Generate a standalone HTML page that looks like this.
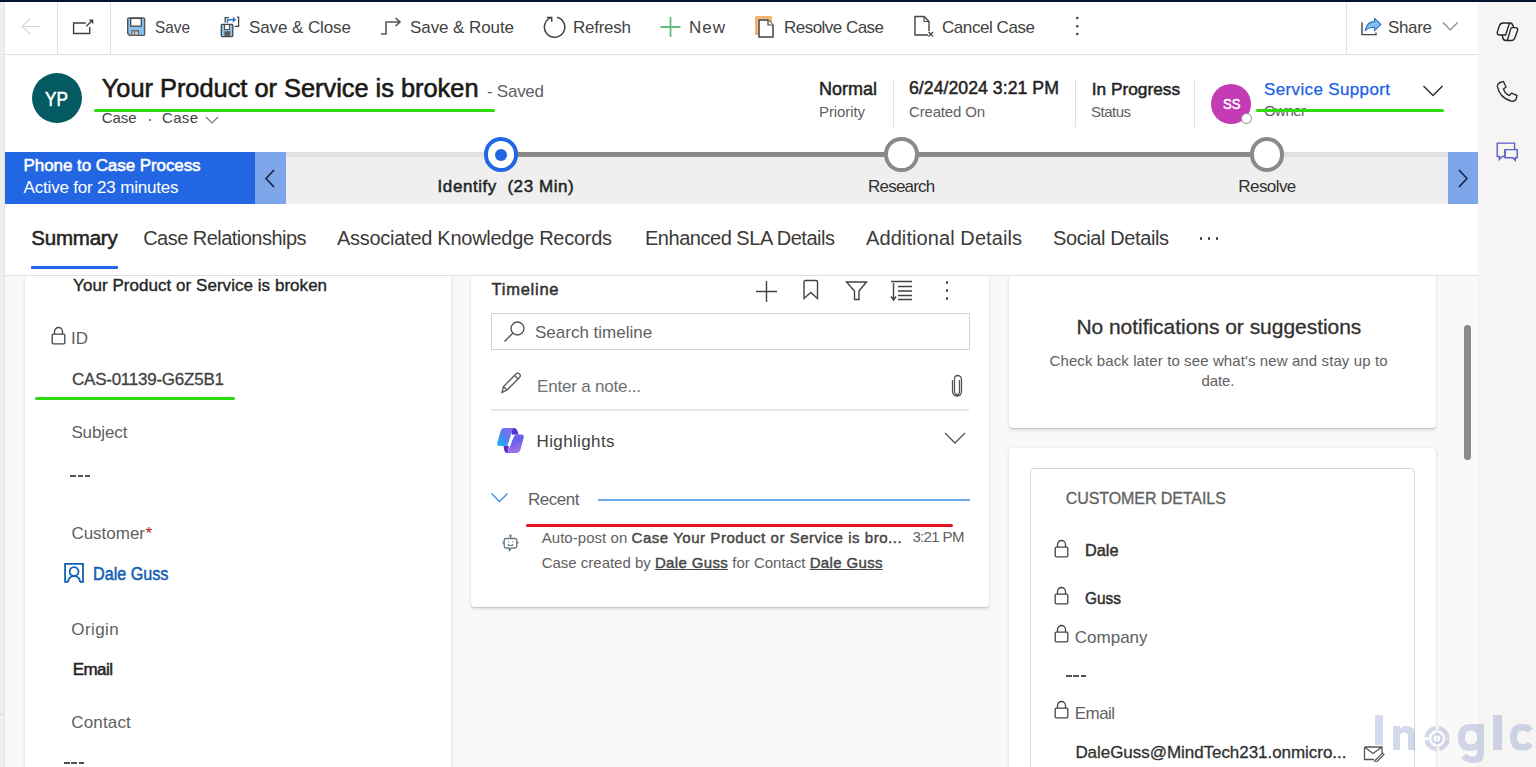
<!DOCTYPE html>
<html><head><meta charset="utf-8"><style>
html,body{margin:0;padding:0;}
body{width:1536px;height:767px;overflow:hidden;position:relative;background:#fff;font-family:"Liberation Sans",sans-serif;}
body>div,body>svg{position:absolute;}
.t{white-space:nowrap;}
</style></head><body>
<div style="left:0px;top:0px;width:1536px;height:767px;background:#fff"></div>
<div style="left:5px;top:276px;width:1473px;height:491px;background:#faf9f8"></div>
<div style="left:1478px;top:2px;width:58px;height:765px;background:#f6f5f4"></div>
<div style="left:0px;top:0px;width:1536px;height:2px;background:#021431"></div>
<div style="left:0px;top:2px;width:5px;height:765px;background:#efefef"></div>
<div style="left:4px;top:2px;width:1px;height:765px;background:#e3e3e3"></div>
<div style="left:0px;top:714px;width:4px;height:1px;background:#dadada"></div>
<div style="left:5px;top:54px;width:1473px;height:1px;background:#e1dfdd"></div>
<div style="left:57px;top:2px;width:1px;height:52px;background:#e1dfdd"></div>
<div style="left:110px;top:2px;width:1px;height:52px;background:#e1dfdd"></div>
<div style="left:1346px;top:2px;width:1px;height:52px;background:#e1dfdd"></div>
<div style="left:5px;top:275px;width:1473px;height:1px;background:#e1dfdd"></div>
<div class="t" style="left:155.00px;top:17.61px;font-size:17px;line-height:18.99px;color:#424242;transform:scaleX(0.9030);transform-origin:0.00px 0;">Save</div>
<div class="t" style="left:249.00px;top:17.61px;font-size:17px;line-height:18.99px;color:#424242;letter-spacing:-0.093px;">Save &amp; Close</div>
<div class="t" style="left:410.00px;top:17.61px;font-size:17px;line-height:18.99px;color:#424242;letter-spacing:-0.081px;">Save &amp; Route</div>
<div class="t" style="left:573.00px;top:17.61px;font-size:17px;line-height:18.99px;color:#424242;letter-spacing:-0.250px;">Refresh</div>
<div class="t" style="left:689.00px;top:17.61px;font-size:17px;line-height:18.99px;color:#424242;letter-spacing:0.957px;">New</div>
<div class="t" style="left:784.00px;top:17.61px;font-size:17px;line-height:18.99px;color:#424242;letter-spacing:-0.530px;">Resolve Case</div>
<div class="t" style="left:942.00px;top:17.61px;font-size:17px;line-height:18.99px;color:#424242;letter-spacing:-0.433px;">Cancel Case</div>
<div class="t" style="left:1388.00px;top:17.61px;font-size:17px;line-height:18.99px;color:#424242;letter-spacing:-0.348px;">Share</div>
<svg style="left:20px;top:16px" width="22" height="20" viewBox="0 0 22 20"><path d="M10.4 2.4 L2.2 10.5 L10.4 18 M2.2 10.5 H19.6" fill="none" stroke="#d6d6d6" stroke-width="1.1"/></svg>
<svg style="left:66px;top:12px" width="30" height="30" viewBox="0 0 30 30"><path d="M19.8 11 H7.6 V21.5 H23.7 V15" fill="none" stroke="#404040" stroke-width="1.4"/><path d="M20.3 14.3 L26.4 8.4 M23.4 8.2 H26.6 V11.4" fill="none" stroke="#404040" stroke-width="1.4"/></svg>
<svg style="left:120px;top:10px" width="30" height="30" viewBox="0 0 30 30"><path d="M8.9 7.9 H23.4 Q24.6 7.9 24.6 9.1 V24.2 Q24.6 25.4 23.4 25.4 H9.6 L7.7 23.5 V9.1 Q7.7 7.9 8.9 7.9 Z" fill="#88c2f0" stroke="#555" stroke-width="1.4"/><rect x="10.7" y="8.4" width="10.6" height="7.8" fill="#fff" stroke="#474747" stroke-width="1.3"/><rect x="11.3" y="20.1" width="7.9" height="5.3" fill="#6a6a6a"/><rect x="12.5" y="21.5" width="5.5" height="3.2" fill="#c8c8c8"/><path d="M14.6 21.5 V24.7" stroke="#6a6a6a" stroke-width="0.9"/></svg>
<svg style="left:215px;top:10px" width="30" height="30" viewBox="0 0 30 30"><rect x="6.3" y="14.3" width="11.5" height="12.3" rx="1" fill="#92c4ea" stroke="#454545" stroke-width="1.3"/><rect x="9.6" y="14.6" width="4.8" height="5" fill="#fff" stroke="#454545" stroke-width="1"/><rect x="9.4" y="21.3" width="5.8" height="4.6" fill="#5a5a5a"/><path d="M13.8 7.6 H10.2 V12.6 M22 7.2 H23.6 V16.3 H19.8" fill="none" stroke="#444" stroke-width="1.3"/><path d="M12.5 13 V9.7 H18.5" fill="none" stroke="#2b79c9" stroke-width="1.5"/><path d="M17.8 6.6 L21.2 9.7 L17.8 12.8 Z" fill="#2b79c9"/></svg>
<svg style="left:379px;top:17px" width="24" height="20" viewBox="0 0 24 20"><path d="M2 17 H7 V5 H21 M16.5 1 L21 5 L16.5 9" fill="none" stroke="#555" stroke-width="1.6"/></svg>
<svg style="left:542px;top:15px" width="24" height="24" viewBox="0 0 24 24"><path d="M15 2.2 A10.2 10.2 0 1 1 9.5 2.4" fill="none" stroke="#424242" stroke-width="1.5"/><path d="M4.8 2.4 H9.7 V6.8" fill="none" stroke="#424242" stroke-width="1.5"/></svg>
<svg style="left:660px;top:16px" width="22" height="22" viewBox="0 0 22 22"><path d="M10.5 1 V21 M0.5 11 H20.5" fill="none" stroke="#5fbe7d" stroke-width="1.8"/></svg>
<svg style="left:754px;top:15px" width="22" height="24" viewBox="0 0 22 24"><rect x="2" y="2" width="15" height="17" fill="#f7c38a" stroke="#f0a04b" stroke-width="1.5"/><path d="M5 5 H14 L19 10 V22 H5 Z" fill="#fff" stroke="#444" stroke-width="1.5"/><path d="M14 5 V10 H19" fill="#fff" stroke="#444" stroke-width="1.2"/></svg>
<svg style="left:913px;top:15px" width="24" height="23" viewBox="0 0 24 23"><path d="M15 20 H2 V1.5 H11 L16 6.5 V16" fill="none" stroke="#444" stroke-width="1.4"/><path d="M11 1.5 V6.5 H16" fill="none" stroke="#444" stroke-width="1.1"/><path d="M15.5 17 L20 21.5 M20 17 L15.5 21.5" stroke="#444" stroke-width="1.3"/></svg>
<svg style="left:1074px;top:15px" width="7" height="23" viewBox="0 0 7 23"><circle cx="3.3" cy="3" r="1.3" fill="#444"/><circle cx="3.3" cy="11.3" r="1.3" fill="#444"/><circle cx="3.3" cy="19" r="1.3" fill="#444"/></svg>
<svg style="left:1360px;top:16px" width="24" height="22" viewBox="0 0 24 22"><path d="M2 6.5 V18.6 H16 V16.5" fill="none" stroke="#424242" stroke-width="1.4"/><path d="M21 8.4 L14.6 2.3 V5.6 C9.5 5.6 6.2 9 5.2 14.6 C7.5 12.2 10.5 11.2 14.6 11.2 V14.6 Z" fill="#86bdee" stroke="#2a72c6" stroke-width="1.1" stroke-linejoin="round"/></svg>
<svg style="left:1441px;top:20px" width="18" height="13" viewBox="0 0 18 13"><path d="M2 2.5 L9.3 10 L16.6 2.5" fill="none" stroke="#8a8886" stroke-width="1.2"/></svg>
<svg style="left:1490px;top:14px" width="36" height="36" viewBox="0 0 36 36"><path d="M13 9 H20 Q22.2 9 23.2 12 L23.8 13.8 M13 9 Q10.2 9 9.3 12 L7.3 18 Q6.6 21 9.6 21 H12.2 L12.7 23.5 Q13.3 26.5 16 26.5 H21.5 Q24 26.5 25 23.5 L27.5 16.5 Q28.2 13.6 25.5 13.6 H21.2 M19.6 9 L15.6 21 H12 M21.2 13.6 L17.2 26.5" fill="none" stroke="#242424" stroke-width="1.35" stroke-linejoin="round"/></svg>
<svg style="left:1496px;top:79.5px" width="22" height="23" viewBox="0 0 22 23"><path d="M4 2.5 L7.5 1.5 L10 7 L7.5 9 C8.5 12 10.5 14.5 13.5 15.5 L15.5 13 L21 15.5 L20 19.5 C19 21 17 21.5 15 21 C8 19 3 13.5 1.5 7 C1 5 2 3.5 4 2.5 Z" fill="none" stroke="#333" stroke-width="1.4"/></svg>
<svg style="left:1496px;top:142px" width="24" height="22" viewBox="0 0 24 22"><path d="M9 7.6 V14.5 H6.2 L3.3 17.6 V14.5 H1.2 V1.1 H18.6 V7.6" fill="none" stroke="#5b5fc7" stroke-width="1.4"/><path d="M9 7.6 H21.2 V15.7 H19.3 V18.3 L16.6 15.7 H9 Z" fill="none" stroke="#5b5fc7" stroke-width="1.4"/></svg>
<div style="left:32px;top:73px;width:50px;height:50px;border-radius:50%;background:#035a62"></div>
<div class="t" style="left:45.20px;top:87.29px;font-size:21px;line-height:23.46px;color:#fff;transform:scaleX(0.8133);transform-origin:0.00px 0;-webkit-text-stroke:0.6px #fff;">YP</div>
<div class="t" style="left:101.70px;top:74.01px;font-size:25.4px;line-height:28.38px;color:#1b1a19;letter-spacing:-0.014px;-webkit-text-stroke:0.6px #1b1a19;">Your Product or Service is broken</div>
<div class="t" style="left:487.00px;top:81.61px;font-size:17px;line-height:18.99px;color:#616161;letter-spacing:-0.261px;">- Saved</div>
<div class="t" style="left:101.70px;top:110.42px;font-size:15px;line-height:16.76px;color:#424242;">Case</div>
<div style="left:149px;top:119px;width:2px;height:2px;background:#555;border-radius:1px"></div>
<div class="t" style="left:162.00px;top:110.42px;font-size:15px;line-height:16.76px;color:#424242;letter-spacing:0.325px;">Case</div>
<svg style="left:205px;top:116px" width="15" height="9" viewBox="0 0 15 9"><path d="M1 1 L7 7 L13 1" fill="none" stroke="#777" stroke-width="1.2"/></svg>
<div style="left:94px;top:109px;width:401px;height:3px;background:#2ddc0f;border-radius:1.5px"></div>
<div class="t" style="left:819.00px;top:79.20px;font-size:18px;line-height:20.11px;color:#242424;-webkit-text-stroke:0.5px #242424;">Normal</div>
<div class="t" style="left:819.00px;top:104.42px;font-size:15px;line-height:16.76px;color:#616161;letter-spacing:-0.093px;">Priority</div>
<div style="left:893px;top:79px;width:1px;height:48px;background:#e0e0e0"></div>
<div class="t" style="left:909.00px;top:79.48px;font-size:17.7px;line-height:19.77px;color:#242424;letter-spacing:0.027px;-webkit-text-stroke:0.5px #242424;">6/24/2024 3:21 PM</div>
<div class="t" style="left:909.00px;top:104.42px;font-size:15px;line-height:16.76px;color:#616161;letter-spacing:-0.172px;">Created On</div>
<div style="left:1075px;top:79px;width:1px;height:48px;background:#e0e0e0"></div>
<div class="t" style="left:1091.70px;top:79.84px;font-size:17.3px;line-height:19.33px;color:#242424;-webkit-text-stroke:0.5px #242424;">In Progress</div>
<div class="t" style="left:1091.00px;top:104.42px;font-size:15px;line-height:16.76px;color:#616161;letter-spacing:-0.505px;">Status</div>
<div style="left:1194px;top:79px;width:1px;height:48px;background:#e0e0e0"></div>
<div style="left:1211px;top:83.5px;width:40px;height:40px;border-radius:50%;background:#c43bb4"></div>
<div class="t" style="left:1222.50px;top:96.32px;font-size:15px;line-height:16.76px;color:#fff;transform:scaleX(0.8739);transform-origin:0.00px 0;-webkit-text-stroke:0.5px #fff;">SS</div>
<div style="left:1240.5px;top:112.5px;width:9px;height:9px;border-radius:50%;background:#fff;border:1.6px solid #8a8886"></div>
<div class="t" style="left:1264.00px;top:80.01px;font-size:17px;line-height:18.99px;color:#1b5fe6;letter-spacing:0.360px;-webkit-text-stroke:0.25px #1b5fe6;">Service Support</div>
<div class="t" style="left:1264.00px;top:103.42px;font-size:15px;line-height:16.76px;color:#616161;letter-spacing:-0.544px;">Owner</div>
<div style="left:1256px;top:109px;width:188px;height:3px;background:#2ddc0f;border-radius:1.5px"></div>
<svg style="left:1422px;top:84px" width="22" height="14" viewBox="0 0 22 14"><path d="M1.5 2 L11 11.5 L20.5 2" fill="none" stroke="#323130" stroke-width="1.5"/></svg>
<div style="left:5px;top:152px;width:250px;height:52px;background:#2266e3"></div>
<div style="left:255px;top:152px;width:31px;height:52px;background:#7ca5ea"></div>
<svg style="left:262px;top:168px" width="16" height="22" viewBox="0 0 16 22"><path d="M12 2 L4 10.5 L12 19" fill="none" stroke="#1b1f3b" stroke-width="1.6"/></svg>
<div style="left:286px;top:152px;width:1162px;height:52px;background:#efefef"></div>
<div style="left:1448px;top:152px;width:30px;height:52px;background:#7ca5ea"></div>
<svg style="left:1455px;top:168px" width="16" height="22" viewBox="0 0 16 22"><path d="M4 2 L12 10.5 L4 19" fill="none" stroke="#1b1f3b" stroke-width="1.6"/></svg>
<div style="left:286px;top:152px;width:1162px;height:5px;background:#e0e0e0"></div>
<div style="left:501px;top:152px;width:766px;height:5px;background:#8a8a8a"></div>
<div style="left:483.6px;top:137.2px;width:26.6px;height:26.6px;border-radius:50%;background:#fff;border:4.5px solid #2266e3"></div>
<div style="left:495.4px;top:149px;width:12px;height:12px;border-radius:50%;background:#2266e3"></div>
<div style="left:884.2px;top:137.3px;width:26.4px;height:26.4px;border-radius:50%;background:#fff;border:4.4px solid #8a8a8a"></div>
<div style="left:1249.8px;top:137.3px;width:26.4px;height:26.4px;border-radius:50%;background:#fff;border:4.4px solid #8a8a8a"></div>
<div class="t" style="left:23.60px;top:156.21px;font-size:17px;line-height:18.99px;color:#fff;letter-spacing:-0.079px;-webkit-text-stroke:0.55px #fff;">Phone to Case Process</div>
<div class="t" style="left:23.60px;top:178.31px;font-size:17px;line-height:18.99px;color:#fff;letter-spacing:-0.189px;">Active for 23 minutes</div>
<div class="t" style="left:437.60px;top:176.81px;font-size:17px;line-height:18.99px;color:#242424;letter-spacing:0.555px;-webkit-text-stroke:0.5px #242424;">Identify&nbsp; (23 Min)</div>
<div class="t" style="left:868.00px;top:176.61px;font-size:17px;line-height:18.99px;color:#323130;letter-spacing:-0.780px;">Research</div>
<div class="t" style="left:1238.30px;top:176.61px;font-size:17px;line-height:18.99px;color:#323130;letter-spacing:-0.576px;">Resolve</div>
<div class="t" style="left:31.25px;top:226.84px;font-size:20.5px;line-height:22.90px;color:#242424;letter-spacing:-0.207px;-webkit-text-stroke:0.55px #242424;">Summary</div>
<div style="left:31px;top:266px;width:87px;height:2.5px;background:#2266e3;border-radius:1px"></div>
<div class="t" style="left:143.20px;top:227.29px;font-size:20px;line-height:22.34px;color:#3b3a39;letter-spacing:-0.529px;">Case Relationships</div>
<div class="t" style="left:337.00px;top:227.29px;font-size:20px;line-height:22.34px;color:#3b3a39;letter-spacing:-0.274px;">Associated Knowledge Records</div>
<div class="t" style="left:645.00px;top:227.29px;font-size:20px;line-height:22.34px;color:#3b3a39;letter-spacing:-0.474px;">Enhanced SLA Details</div>
<div class="t" style="left:866.00px;top:227.29px;font-size:20px;line-height:22.34px;color:#3b3a39;letter-spacing:0.088px;">Additional Details</div>
<div class="t" style="left:1053.00px;top:227.29px;font-size:20px;line-height:22.34px;color:#3b3a39;letter-spacing:-0.400px;">Social Details</div>
<div style="left:1199.5px;top:237.3px;width:2.6px;height:2.6px;background:#323130;border-radius:50%"></div>
<div style="left:1207.5px;top:237.3px;width:2.6px;height:2.6px;background:#323130;border-radius:50%"></div>
<div style="left:1215.5px;top:237.3px;width:2.6px;height:2.6px;background:#323130;border-radius:50%"></div>
<div style="left:25px;top:276px;width:426px;height:491px;background:#fff;box-shadow:0 1.6px 3.6px rgba(0,0,0,0.13),0 0.3px 0.9px rgba(0,0,0,0.11)"></div>
<div style="left:471px;top:276px;width:518px;height:331px;background:#fff;border-radius:0 0 4px 4px;box-shadow:0 1.6px 3.6px rgba(0,0,0,0.13),0 0.3px 0.9px rgba(0,0,0,0.11)"></div>
<div style="left:1009px;top:276px;width:427px;height:152px;background:#fff;border-radius:0 0 4px 4px;box-shadow:0 1.6px 3.6px rgba(0,0,0,0.13),0 0.3px 0.9px rgba(0,0,0,0.11)"></div>
<div style="left:1009px;top:448px;width:427px;height:330px;background:#fff;border-radius:4px;box-shadow:0 1.6px 3.6px rgba(0,0,0,0.13),0 0.3px 0.9px rgba(0,0,0,0.11)"></div>
<div style="left:1030px;top:468px;width:383px;height:320px;background:#fff;border-radius:4px;border:1px solid #d6d6d6"></div>
<div style="left:5px;top:275px;width:1473px;height:1px;background:#e1dfdd"></div>
<div style="left:1463.5px;top:325px;width:7.5px;height:134.5px;background:#8a8a8a;border-radius:4px"></div>
<div class="t" style="left:73.10px;top:276.41px;font-size:17px;line-height:18.99px;color:#242424;letter-spacing:0.043px;-webkit-text-stroke:0.35px #242424;">Your Product or Service is broken</div>
<svg style="left:50.5px;top:326.0px" width="15" height="19" viewBox="0 0 15 19"><path d="M3.5 8 V5.5 A4 4 0 0 1 11.5 5.5 V8" fill="none" stroke="#444" stroke-width="1.3"/><rect x="1.2" y="8.2" width="12.6" height="9.6" rx="1" fill="none" stroke="#444" stroke-width="1.3"/></svg>
<div class="t" style="left:71.00px;top:328.91px;font-size:17px;line-height:18.99px;color:#616161;">ID</div>
<div class="t" style="left:72.00px;top:369.61px;font-size:17px;line-height:18.99px;color:#424242;letter-spacing:-0.242px;-webkit-text-stroke:0.3px #424242;">CAS-01139-G6Z5B1</div>
<div style="left:35px;top:396.5px;width:200px;height:3px;background:#2ddc0f;border-radius:1.5px"></div>
<div class="t" style="left:71.40px;top:423.21px;font-size:17px;line-height:18.99px;color:#616161;letter-spacing:-0.116px;">Subject</div>
<div style="left:70.3px;top:474.8px;width:5.5px;height:2px;background:#505050"></div>
<div style="left:77.6px;top:474.8px;width:5.5px;height:2px;background:#505050"></div>
<div style="left:84.9px;top:474.8px;width:5.5px;height:2px;background:#505050"></div>
<div class="t" style="left:71.40px;top:523.61px;font-size:17px;line-height:18.99px;color:#616161;letter-spacing:-0.014px;">Customer</div>
<div class="t" style="left:145.50px;top:523.61px;font-size:17px;line-height:18.99px;color:#c50f1f;">*</div>
<svg style="left:63.5px;top:563px" width="21" height="20" viewBox="0 0 21 20"><path d="M4.2 18.9 H1.1 V0.9 H19 V18.9 H16" fill="none" stroke="#1160b7" stroke-width="1.8"/><circle cx="10.1" cy="8.5" r="4.4" fill="none" stroke="#1160b7" stroke-width="1.8"/><path d="M4.2 18.9 Q4.6 13.2 10.1 13.2 Q15.6 13.2 16 18.9" fill="none" stroke="#1160b7" stroke-width="1.8"/></svg>
<div class="t" style="left:92.50px;top:564.66px;font-size:17.5px;line-height:19.55px;color:#1160b7;transform:scaleX(0.9226);transform-origin:0.00px 0;-webkit-text-stroke:0.5px #1160b7;">Dale Guss</div>
<div class="t" style="left:71.30px;top:620.31px;font-size:17px;line-height:18.99px;color:#616161;letter-spacing:0.402px;">Origin</div>
<div class="t" style="left:72.70px;top:659.91px;font-size:17px;line-height:18.99px;color:#242424;letter-spacing:-0.550px;-webkit-text-stroke:0.5px #242424;">Email</div>
<div class="t" style="left:71.30px;top:712.91px;font-size:17px;line-height:18.99px;color:#616161;letter-spacing:0.156px;">Contact</div>
<div style="left:64.0px;top:761.8px;width:5.5px;height:2px;background:#505050"></div>
<div style="left:71.3px;top:761.8px;width:5.5px;height:2px;background:#505050"></div>
<div style="left:78.6px;top:761.8px;width:5.5px;height:2px;background:#505050"></div>
<div class="t" style="left:491.50px;top:280.06px;font-size:16.5px;line-height:18.43px;color:#323130;letter-spacing:0.756px;-webkit-text-stroke:0.5px #323130;">Timeline</div>
<svg style="left:755px;top:280px" width="23" height="23" viewBox="0 0 23 23"><path d="M11.5 1 V22 M1 11.5 H22" fill="none" stroke="#424242" stroke-width="1.4"/></svg>
<svg style="left:802px;top:279px" width="18" height="22" viewBox="0 0 18 22"><path d="M2 3 C2 2 2.5 1.5 3.5 1.5 H14 C15 1.5 15.5 2 15.5 3 V19.5 L8.75 13.5 L2 19.5 Z" fill="none" stroke="#424242" stroke-width="1.4"/></svg>
<svg style="left:845px;top:280px" width="24" height="22" viewBox="0 0 24 22"><path d="M1.5 2 H21.5 L14 11 V19.5 H9.5 V11 Z" fill="none" stroke="#424242" stroke-width="1.4"/></svg>
<svg style="left:890px;top:279px" width="24" height="23" viewBox="0 0 24 23"><path d="M1 2.5 H22 M8 7.5 H22 M8 12 H22 M8 16.5 H22 M8 20.5 H22 M3.5 4 V20 M1 17.5 L3.5 21 L6 17.5" fill="none" stroke="#424242" stroke-width="1.4"/></svg>
<div style="left:945.5px;top:281.3px;width:2.8px;height:2.8px;border-radius:50%;background:#424242"></div>
<div style="left:945.5px;top:289.2px;width:2.8px;height:2.8px;border-radius:50%;background:#424242"></div>
<div style="left:945.5px;top:296.9px;width:2.8px;height:2.8px;border-radius:50%;background:#424242"></div>
<div style="left:491px;top:313px;width:477px;height:35px;border:1px solid #d1d1d1;background:#fff"></div>
<svg style="left:503px;top:320px" width="24" height="23" viewBox="0 0 24 23"><circle cx="14.5" cy="8.5" r="6.5" fill="none" stroke="#555" stroke-width="1.4"/><path d="M10 13 L1.5 21.5" fill="none" stroke="#555" stroke-width="1.4"/></svg>
<div class="t" style="left:535.00px;top:323.41px;font-size:17px;line-height:18.99px;color:#616161;">Search timeline</div>
<svg style="left:500px;top:371px" width="23" height="23" viewBox="0 0 23 23"><path d="M2 21.5 L3.5 15.5 L16 3 C17 2 18.5 2 19.5 3 C20.5 4 20.5 5.5 19.5 6.5 L7 19 Z M14.5 4.5 L18 8 M3.5 15.5 L7 19" fill="none" stroke="#555" stroke-width="1.3"/></svg>
<div class="t" style="left:537.00px;top:377.41px;font-size:17px;line-height:18.99px;color:#707070;letter-spacing:-0.197px;">Enter a note...</div>
<svg style="left:950px;top:374px" width="14" height="23" viewBox="0 0 14 23"><path d="M9.5 6 V17 C9.5 19 8.5 20.5 7 20.5 C5.5 20.5 4.5 19 4.5 17 V5 C4.5 3 5.5 1.5 7.5 1.5 C9.5 1.5 11.5 3 11.5 5.5 V17 C11.5 20 10 22 7 22 C4 22 2.5 20 2.5 17 V6" fill="none" stroke="#555" stroke-width="1.3"/></svg>
<div style="left:491px;top:409px;width:478px;height:2px;background:#e6e6e6"></div>
<svg style="left:490px;top:420px" width="40" height="40" viewBox="0 0 40 40"><defs><linearGradient id="cg1" x1="0" y1="1" x2="0.8" y2="0"><stop offset="0" stop-color="#16b8f4"/><stop offset="0.6" stop-color="#5a7cf0"/><stop offset="1" stop-color="#8a6ae8"/></linearGradient><linearGradient id="cg2" x1="0" y1="0" x2="0.3" y2="1"><stop offset="0" stop-color="#8b6cf0"/><stop offset="0.4" stop-color="#6360e6"/><stop offset="1" stop-color="#a070ec"/></linearGradient></defs>
<path d="M20 8 H23.5 Q26.5 8 27.5 11 L28.7 14.8 H22 Z" fill="#4a3ad0"/>
<path d="M14 8 H23 L17.5 26 H10 Q6.5 26 7.3 22.5 L10.5 11.5 Q11.5 8 14 8 Z" fill="url(#cg1)"/>
<path d="M13.5 26 H19 L17.8 33 H17 Q14.8 33 14.2 30 Z" fill="#6a28c8"/>
<path d="M24.5 14.5 H31 Q34.5 14.5 33.6 18 L30.5 29.5 Q29.5 33 26 33 H17.5 Z" fill="url(#cg2)"/>
<path d="M24.3 14.5 L18 26" stroke="#fff" stroke-width="1.2"/></svg>
<div class="t" style="left:536.50px;top:431.61px;font-size:17px;line-height:18.99px;color:#424242;letter-spacing:0.374px;">Highlights</div>
<svg style="left:943px;top:431px" width="24" height="15" viewBox="0 0 24 15"><path d="M2 2 L12 12 L22 2" fill="none" stroke="#555" stroke-width="1.4"/></svg>
<svg style="left:490px;top:491px" width="20" height="14" viewBox="0 0 20 14"><path d="M1.5 2.5 L9.5 10.5 L17.5 2.5" fill="none" stroke="#4a90e2" stroke-width="1.5"/></svg>
<div class="t" style="left:528.00px;top:489.61px;font-size:17px;line-height:18.99px;color:#616161;letter-spacing:-0.478px;">Recent</div>
<div style="left:598px;top:499px;width:371.6px;height:1.6px;background:#6aaae8"></div>
<div style="left:526px;top:524px;width:426.6px;height:3px;background:#e81123;border-radius:1.5px"></div>
<svg style="left:495px;top:525px" width="30" height="35" viewBox="0 0 30 35"><circle cx="15.5" cy="10.7" r="1.3" fill="#6b7a84"/><path d="M15.5 11 V13" stroke="#6b7a84" stroke-width="1.2"/><path d="M11 13.5 H20 Q21.8 13.5 21.8 15.3 V21.2 Q21.8 23 20 23 H16.3 L14.3 25.8 V23 H11 Q9.2 23 9.2 21.2 V15.3 Q9.2 13.5 11 13.5 Z" fill="none" stroke="#6b7a84" stroke-width="1.3" stroke-linejoin="round"/><path d="M8.3 16.5 V18.8 M22.7 16.5 V18.8" stroke="#6b7a84" stroke-width="1.3"/><path d="M13.3 16.3 V17.6 M17.7 16.3 V17.6" stroke="#8a979e" stroke-width="1.1"/><path d="M12.6 19.4 Q15.5 21.6 18.4 19.4" fill="none" stroke="#6b7a84" stroke-width="1.2"/></svg>
<div class="t" style="left:541.7px;top:529.72px;font-size:15px;line-height:16.76px;color:#616161;letter-spacing:0.05px">Auto-post on <span style="color:#474747;-webkit-text-stroke:0.45px #474747;letter-spacing:0.54px">Case Your Product or Service is bro...</span></div>
<div class="t" style="left:912.40px;top:528.92px;font-size:15px;line-height:16.76px;color:#616161;letter-spacing:-0.646px;">3:21 PM</div>
<div class="t" style="left:541.7px;top:554.62px;font-size:15px;line-height:16.76px;color:#616161;letter-spacing:-0.01px">Case created by <span style="color:#474747;-webkit-text-stroke:0.45px #474747;text-decoration:underline;letter-spacing:0.35px">Dale Guss</span> for Contact <span style="color:#474747;-webkit-text-stroke:0.45px #474747;text-decoration:underline;letter-spacing:0.35px">Dale Guss</span></div>
<div class="t" style="left:1076.40px;top:314.89px;font-size:21px;line-height:23.46px;color:#323130;letter-spacing:-0.034px;-webkit-text-stroke:0.3px #323130;">No notifications or suggestions</div>
<div class="t" style="left:1049.50px;top:353.42px;font-size:15px;line-height:16.76px;color:#616161;letter-spacing:0.103px;">Check back later to see what's new and stay up to</div>
<div class="t" style="left:1201.50px;top:372.92px;font-size:15px;line-height:16.76px;color:#616161;letter-spacing:-0.094px;">date.</div>
<div class="t" style="left:1065.80px;top:489.62px;font-size:16px;line-height:17.88px;color:#616161;letter-spacing:-0.080px;-webkit-text-stroke:0.3px #616161;">CUSTOMER DETAILS</div>
<svg style="left:1054px;top:538.5px" width="15" height="19" viewBox="0 0 15 19"><path d="M3.5 8 V5.5 A4 4 0 0 1 11.5 5.5 V8" fill="none" stroke="#444" stroke-width="1.3"/><rect x="1.2" y="8.2" width="12.6" height="9.6" rx="1" fill="none" stroke="#444" stroke-width="1.3"/></svg>
<div class="t" style="left:1084.60px;top:541.31px;font-size:17px;line-height:18.99px;color:#323130;transform:scaleX(0.9561);transform-origin:0.00px 0;-webkit-text-stroke:0.5px #323130;">Dale</div>
<svg style="left:1054px;top:586.0px" width="15" height="19" viewBox="0 0 15 19"><path d="M3.5 8 V5.5 A4 4 0 0 1 11.5 5.5 V8" fill="none" stroke="#444" stroke-width="1.3"/><rect x="1.2" y="8.2" width="12.6" height="9.6" rx="1" fill="none" stroke="#444" stroke-width="1.3"/></svg>
<div class="t" style="left:1084.60px;top:588.61px;font-size:17px;line-height:18.99px;color:#323130;transform:scaleX(0.9069);transform-origin:0.00px 0;-webkit-text-stroke:0.5px #323130;">Guss</div>
<svg style="left:1054px;top:624.0px" width="15" height="19" viewBox="0 0 15 19"><path d="M3.5 8 V5.5 A4 4 0 0 1 11.5 5.5 V8" fill="none" stroke="#444" stroke-width="1.3"/><rect x="1.2" y="8.2" width="12.6" height="9.6" rx="1" fill="none" stroke="#444" stroke-width="1.3"/></svg>
<div class="t" style="left:1074.80px;top:628.21px;font-size:17px;line-height:18.99px;color:#616161;">Company</div>
<div style="left:1066.0px;top:675.2px;width:5.5px;height:2px;background:#505050"></div>
<div style="left:1073.3px;top:675.2px;width:5.5px;height:2px;background:#505050"></div>
<div style="left:1080.6px;top:675.2px;width:5.5px;height:2px;background:#505050"></div>
<svg style="left:1054px;top:700.0px" width="15" height="19" viewBox="0 0 15 19"><path d="M3.5 8 V5.5 A4 4 0 0 1 11.5 5.5 V8" fill="none" stroke="#444" stroke-width="1.3"/><rect x="1.2" y="8.2" width="12.6" height="9.6" rx="1" fill="none" stroke="#444" stroke-width="1.3"/></svg>
<div class="t" style="left:1074.80px;top:703.81px;font-size:17px;line-height:18.99px;color:#616161;letter-spacing:-0.575px;">Email</div>
<div class="t" style="left:1075.40px;top:743.41px;font-size:17px;line-height:18.99px;color:#323130;letter-spacing:-0.045px;-webkit-text-stroke:0.3px #323130;">DaleGuss@MindTech231.onmicro...</div>
<svg style="left:1363px;top:745px" width="22" height="17" viewBox="0 0 22 17"><path d="M1.5 2 H19 V8 M1.5 2 V14.5 H11 M1.5 2 L10 8.5 L19 2" fill="none" stroke="#555" stroke-width="1.3"/><path d="M12 15.5 L19.5 8 L21 9.5 L13.5 17 L11.5 17.5 Z" fill="none" stroke="#555" stroke-width="1.2"/></svg>
<svg style="left:1370px;top:710px" width="166" height="57" viewBox="0 0 166 57"><g fill="rgba(140,152,200,0.38)"><path d="M5 5 H13 V35 H5 Z"/><path d="M23 16 H30 V19 Q33 15.5 38 16 Q45 17 45 25 V40 H38 V26 Q38 22.5 34 22.5 Q30 22.5 30 26 V40 H23 Z"/><path fill-rule="evenodd" d="M101 14 H114 V44 Q114 53 104 53 Q96 53 91 48 L96 43.5 Q99 46.5 103 46.5 Q107 46.5 107 43 V39 Q105 41 100 41 Q88 41 88 27.5 Q88 14 101 14 Z M101 20.5 Q95 20.5 95 27.5 Q95 34.5 101 34.5 Q107 34.5 107 27.5 Q107 20.5 101 20.5 Z"/><path d="M123 5 H132 V40 H123 Z"/><path d="M152 14 Q160 14 163 19 L157.5 22.5 Q155.5 20.5 152.5 20.5 Q147 20.5 147 27.5 Q147 34 152.5 34 Q155.5 34 157.5 32 L163 35.5 Q160 40.5 152 40.5 Q140 40.5 140 27.3 Q140 14 152 14 Z"/></g><circle cx="67" cy="28.5" r="10.5" fill="none" stroke="rgba(140,152,200,0.38)" stroke-width="4.5" stroke-dasharray="14 3"/><circle cx="67" cy="28.5" r="4.5" fill="none" stroke="rgba(140,152,200,0.38)" stroke-width="2.5"/></svg>
</body></html>
